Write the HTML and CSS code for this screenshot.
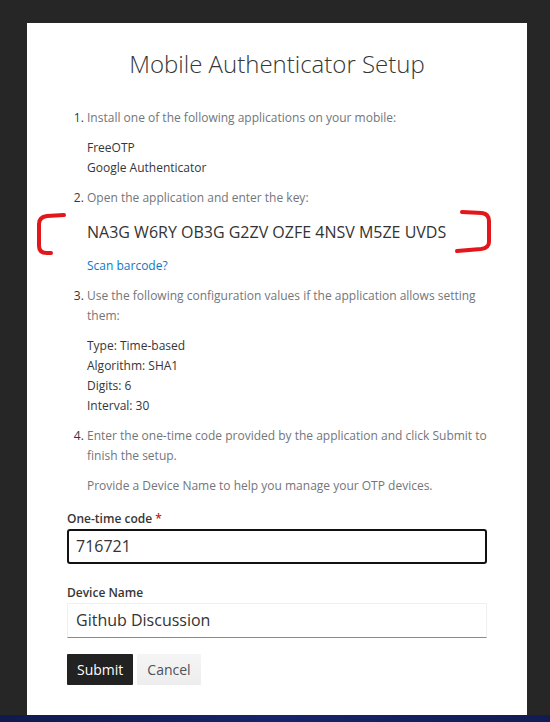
FILE: index.html
```html
<!DOCTYPE html>
<html lang="en">
<head>
    <meta charset="UTF-8">
    <meta name="viewport" content="width=device-width, initial-scale=1.0">
    <title>Mobile Authenticator Setup</title>
    <link rel="stylesheet" href="styles.css">
</head>
<body>
    <div class="card">
        <h1>Mobile Authenticator Setup</h1>
        <ol class="steps">
            <li>
                <p class="step">Install one of the following applications on your mobile:</p>
                <ul class="values">
                    <li>FreeOTP</li>
                    <li>Google Authenticator</li>
                </ul>
            </li>
            <li>
                <p class="step">Open the application and enter the key:</p>
                <div class="key-wrap">
                    <p class="key">NA3G W6RY OB3G G2ZV OZFE 4NSV M5ZE UVDS</p>
                    <svg class="marks" width="470" height="50" viewBox="0 0 470 50">
                        <path d="M47 3 L30 4 Q22 5 22 12 L22 34 Q22 41 30 41 L34 41" />
                        <path d="M445 0 L465 1 Q472 2 472 9 L472 30 Q472 36 464 37 L440 39" />
                    </svg>
                </div>
                <p><a href="#" class="link">Scan barcode?</a></p>
            </li>
            <li>
                <p class="step">Use the following configuration values if the application allows setting them:</p>
                <ul class="values">
                    <li>Type: Time-based</li>
                    <li>Algorithm: SHA1</li>
                    <li>Digits: 6</li>
                    <li>Interval: 30</li>
                </ul>
            </li>
            <li>
                <p class="step">Enter the one-time code provided by the application and click Submit to finish the setup.</p>
                <p class="step">Provide a Device Name to help you manage your OTP devices.</p>
            </li>
        </ol>

        <form class="form" onsubmit="return false;">
            <div class="group">
                <label class="label" for="totp">One-time code <span class="required">*</span></label>
                <input id="totp" class="input input-focus" type="text" value="716721">
            </div>
            <div class="group">
                <label class="label" for="userLabel">Device Name</label>
                <input id="userLabel" class="input" type="text" value="Github Discussion">
            </div>
            <div class="buttons">
                <button class="btn btn-primary" type="submit">Submit</button>
                <button class="btn btn-default" type="button">Cancel</button>
            </div>
        </form>
    </div>
    <div class="taskbar"></div>
</body>
</html>
```

FILE: styles.css
```css
* {
    box-sizing: border-box;
}
body {
    margin: 0;
    height: 722px;
    overflow: hidden;
    background-color: #262626;
    font-family: "Open Sans", "Liberation Sans", sans-serif;
    font-size: 12px;
    line-height: 20px;
    color: #363636;
}
.card {
    width: 500px;
    height: 692px;
    margin: 23px 0 0 27px;
    padding: 0 40px;
    background: white;
    overflow: hidden;
}
h1 {
    margin: 27px 0 0;
    font-size: 24px;
    font-weight: 300;
    line-height: 28.8px;
    text-align: center;
    color: #363636;
}
.steps {
    margin: 29px 0 0;
    padding-left: 20px;
}
.steps p {
    margin: 0 0 10px;
}
.step {
    color: #72767b;
}
.values {
    list-style: none;
    margin: 0 0 10px;
    padding: 0;
}
.key-wrap {
    position: relative;
}
.key {
    font-size: 16px;
    line-height: 28px;
    color: #333;
}
.marks {
    position: absolute;
    left: -70px;
    top: -6px;
    overflow: visible;
}
.marks path {
    fill: none;
    stroke: #e3161b;
    stroke-width: 4;
    stroke-linecap: round;
    stroke-linejoin: round;
}
.link {
    color: #0a78c6;
    text-decoration: none;
}
.form {
    margin-top: 13px;
}
.group {
    margin-bottom: 19px;
}
.label {
    display: block;
    font-weight: 600;
    color: #363636;
}
.required {
    color: #c9190b;
}
.input {
    display: block;
    width: 100%;
    height: 35px;
    padding: 0 8px;
    font-family: inherit;
    font-size: 16px;
    color: #333;
    background: white;
    border: 1px solid #f0f0f0;
    border-bottom-color: #8a8d90;
    outline: none;
}
.input-focus {
    padding: 0 7px;
    border: 2px solid #111;
    border-radius: 3px;
}
.buttons {
    display: flex;
    gap: 4px;
    margin-top: -3px;
}
.btn {
    height: 31px;
    padding: 0 10px;
    font-family: inherit;
    font-size: 14px;
    border: none;
    border-radius: 1px;
    cursor: pointer;
}
.btn-primary {
    background: #222;
    color: white;
}
.btn-default {
    padding: 0 10px;
    background: linear-gradient(#f5f5f5, #ededed);
    color: #4d5258;
}
.taskbar {
    height: 7px;
    background: linear-gradient(90deg, #101a4e, #16246a 50%, #111c55);
}
```
